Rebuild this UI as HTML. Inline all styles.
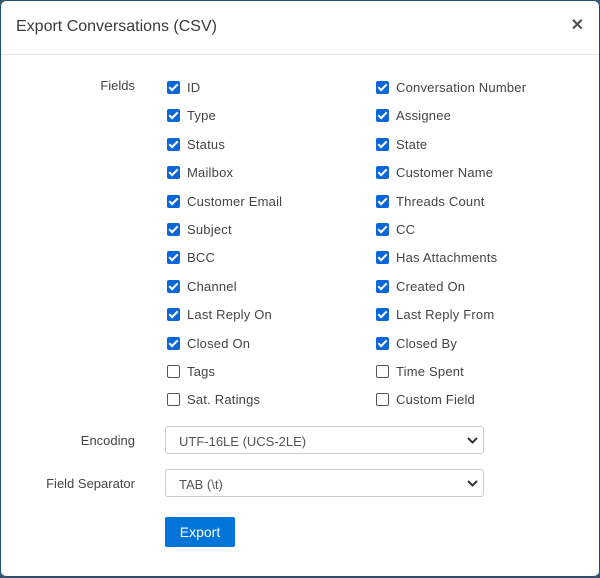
<!DOCTYPE html>
<html><head><style>
*{box-sizing:border-box;margin:0;padding:0}
body{width:600px;height:578px;background:#3a5068;font-family:"Liberation Sans",sans-serif;overflow:hidden;position:relative}
.m{position:absolute;left:0;top:0;width:600px;height:577px;background:#fff;box-shadow:inset 0 0 0 1px #1f4e79;border-radius:6px}
.h{height:55px;margin:0 1px;border-bottom:1px solid #e5e5e5;position:relative}
.h h4{position:absolute;left:15px;top:18px;font-size:16px;font-weight:normal;color:#3a3a3a}
.x{position:absolute;right:15px;top:15px;font-size:16px;font-weight:bold;color:#555}
.lbl{position:absolute;font-size:13px;color:#444;text-align:right;width:135px;left:0}
.cb{position:absolute;font-size:13px;color:#444;height:14px;line-height:14px;letter-spacing:0.2px}
.cb i{position:absolute;left:0;top:0;width:13px;height:13px;border-radius:2px}
.cb i.on{background:#0b67d8}
.cb i.off{border:1px solid #555;background:#fff}
.cb i.on::after{content:"";position:absolute;left:4px;top:1px;width:3px;height:7px;border:solid #fff;border-width:0 2px 2px 0;transform:rotate(45deg)}
.cb span{position:absolute;left:20px;top:0;white-space:nowrap}
.sel{position:absolute;left:165px;width:319px;height:28px;border:1px solid #ccc;border-radius:3px;font-size:13px;color:#555;padding:7px 0 0 13px}
.sel svg{position:absolute;right:5px;top:10px}
.btn{position:absolute;left:165px;top:517px;width:70px;height:30px;background:#0074d9;border-radius:2px;color:#fff;font-size:14px;text-align:center;line-height:30px}
</style></head><body>
<div class="m">
<div class="h"><h4>Export Conversations (CSV)</h4><div class="x">✕</div></div>
<div class="lbl" style="top:78px">Fields</div>
<div id="cbs"></div>
<div class="lbl" style="top:433px">Encoding</div>
<div class="sel" style="top:426px">UTF-16LE (UCS-2LE)<svg width="11" height="8" viewBox="0 0 11 8"><path d="M1 1l4.5 4.5L10 1" stroke="#333" stroke-width="2" fill="none"/></svg></div>
<div class="lbl" style="top:476px">Field Separator</div>
<div class="sel" style="top:469px">TAB (\t)<svg width="11" height="8" viewBox="0 0 11 8"><path d="M1 1l4.5 4.5L10 1" stroke="#333" stroke-width="2" fill="none"/></svg></div>
<div class="btn">Export</div>
</div>
<script>
var L=[["ID",1,"Conversation Number",1],["Type",1,"Assignee",1],["Status",1,"State",1],["Mailbox",1,"Customer Name",1],["Customer Email",1,"Threads Count",1],["Subject",1,"CC",1],["BCC",1,"Has Attachments",1],["Channel",1,"Created On",1],["Last Reply On",1,"Last Reply From",1],["Closed On",1,"Closed By",1],["Tags",0,"Time Spent",0],["Sat. Ratings",0,"Custom Field",0]];
var h="";L.forEach(function(r,i){var y=Math.round(81+i*28.4);
h+='<div class="cb" style="left:167px;top:'+y+'px"><i class="'+(r[1]?'on':'off')+'"></i><span>'+r[0]+'</span></div>';
h+='<div class="cb" style="left:376px;top:'+y+'px"><i class="'+(r[3]?'on':'off')+'"></i><span>'+r[2]+'</span></div>';});
document.getElementById("cbs").innerHTML=h;
</script>
</body></html>
